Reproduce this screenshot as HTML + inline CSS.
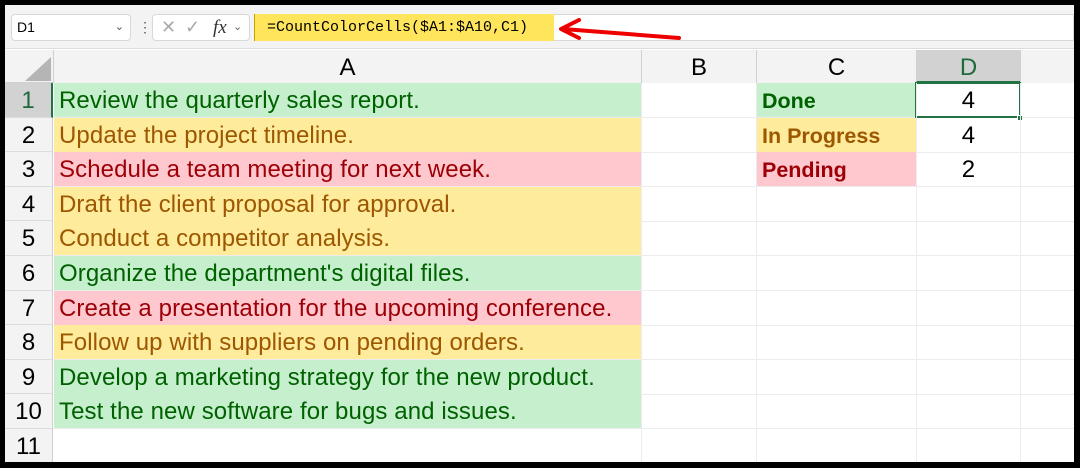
<!DOCTYPE html>
<html><head><style>
*{margin:0;padding:0;box-sizing:border-box}
body{width:1080px;height:468px;background:#000;position:relative;overflow:hidden;font-family:"Liberation Sans",sans-serif}
#app{position:absolute;left:5px;top:5px;width:1069px;height:457px;background:#fff;overflow:hidden}
#fb{position:absolute;left:0;top:0;width:1069px;height:44px;background:#f3f3f3;border-bottom:1px solid #dcdcdc}
.box{position:absolute;background:#fff;border:1px solid #d8d8d8;border-radius:4px}
.hdr{position:absolute;background:#f3f3f3;color:#000;font-size:24px;text-align:center}
.cell{position:absolute;font-size:24px;letter-spacing:0.1px;line-height:36px;padding-left:5px;white-space:nowrap}
.g{background:#c6efce;color:#006100}.y{background:#ffeb9c;color:#9c5700}.r{background:#ffc7ce;color:#9c0006}
.vl{position:absolute;top:78px;width:1px;height:379px;background:#ececec}
.hl{position:absolute;left:48px;width:1021px;height:1px;background:#ececec}
</style></head><body><div id="app">
<div id="fb">
 <div class="box" style="left:6px;top:9px;width:120px;height:27px;font-size:14px;line-height:25px;padding-left:5px">D1<span style="position:absolute;right:6px;color:#555;font-size:11px">&#8964;</span></div>
 <div style="position:absolute;left:133px;top:14px;color:#555;font-size:14px">&#8942;</div>
 <div class="box" style="left:147px;top:9px;width:98px;height:27px;color:#aaa;font-size:18px;line-height:25px">
  <span style="position:absolute;left:8px">✕</span><span style="position:absolute;left:32px">✓</span>
  <i style="position:absolute;left:60px;color:#333;font-family:'Liberation Serif',serif;font-size:19px">fx</i><span style="position:absolute;left:80px;font-size:11px;color:#666">&#8964;</span></div>
 <div style="position:absolute;left:249px;top:9px;width:300px;height:27px;background:#ffe55c;border-left:1px solid #c8a000;font-family:'Liberation Mono',monospace;font-size:15px;line-height:27px;padding-left:12px">=CountColorCells($A1:$A10,C1)</div>
 <div class="box" style="left:549px;top:9px;width:520px;height:27px;border-left:none;border-radius:0"></div>
 <svg style="position:absolute;left:550px;top:12px" width="130" height="24"><path d="M8 12 L124 21" stroke="#e00" stroke-width="4" stroke-linecap="round"/><path d="M24 3 L6 12 L24 21" stroke="#e00" stroke-width="4" fill="none" stroke-linecap="round" stroke-linejoin="round"/></svg>
</div>
<div class="hdr" style="left:0;top:45px;width:1069px;height:33px;border-bottom:1px solid #d0d0d0"></div>
<div class="hdr" style="left:0;top:78px;width:48px;height:379px;border-right:1px solid #d0d0d0"></div>
<svg style="position:absolute;left:18px;top:50px" width="30" height="28"><polygon points="28,2 28,26 2,26" fill="#b5b5b5"/></svg>
<div class="hdr" style="left:48px;top:45px;width:588px;height:33px;line-height:35px;border-left:1px solid #d0d0d0">A</div>
<div class="hdr" style="left:636px;top:45px;width:115px;height:33px;line-height:35px;border-left:1px solid #d0d0d0">B</div>
<div class="hdr" style="left:751px;top:45px;width:160px;height:33px;line-height:35px;border-left:1px solid #d0d0d0">C</div>
<div class="hdr" style="left:911px;top:45px;width:104px;height:33px;line-height:35px;background:#d2d2d2;color:#1e6b3c;border-left:1px solid #d0d0d0;border-bottom:2px solid #217346">D</div>
<div class="hdr" style="left:1015px;top:45px;width:54px;height:33px;border-left:1px solid #d0d0d0"></div>
<div id="rows"></div>
<div class="vl" style="left:636px"></div><div class="vl" style="left:751px"></div><div class="vl" style="left:911px"></div><div class="vl" style="left:1015px"></div>
<script>
var t=[["Review the quarterly sales report.","g"],["Update the project timeline.","y"],["Schedule a team meeting for next week.","r"],["Draft the client proposal for approval.","y"],["Conduct a competitor analysis.","y"],["Organize the department's digital files.","g"],["Create a presentation for the upcoming conference.","r"],["Follow up with suppliers on pending orders.","y"],["Develop a marketing strategy for the new product.","g"],["Test the new software for bugs and issues.","g"]];
var h="";
for(var i=0;i<11;i++){var y=78+i*34.6;
h+='<div class="hdr" style="left:0;top:'+y+'px;width:48px;height:34.6px;line-height:36px;'+(i==0?'background:#d2d2d2;color:#1e6b3c;border-right:2px solid #217346;':'border-right:1px solid #d0d0d0;')+'border-bottom:1px solid #dcdcdc">'+(i+1)+'</div>';
h+='<div class="hl" style="top:'+(y+34)+'px"></div>';
if(i<10)h+='<div class="cell '+t[i][1]+'" style="left:49px;top:'+y+'px;width:587px;height:34px">'+t[i][0]+'</div>';}
var c=[["Done","g","4"],["In Progress","y","4"],["Pending","r","2"]];
for(var i=0;i<3;i++){var y=78+i*34.6;
h+='<div class="cell '+c[i][1]+'" style="left:752px;top:'+y+'px;width:159px;height:34px;font-weight:bold;font-size:21.5px;letter-spacing:0">'+c[i][0]+'</div>';
h+='<div class="cell" style="left:912px;top:'+y+'px;width:103px;height:34px;text-align:center;padding:0;font-size:24px">'+c[i][2]+'</div>';}
h+='<div style="position:absolute;left:910px;top:77px;width:106px;height:36px;border:2px solid #217346"></div><div style="position:absolute;left:1012px;top:110px;width:6px;height:6px;background:#217346;border:1px solid #fff"></div>';
document.getElementById("rows").innerHTML=h;
</script>
</div></body></html>
